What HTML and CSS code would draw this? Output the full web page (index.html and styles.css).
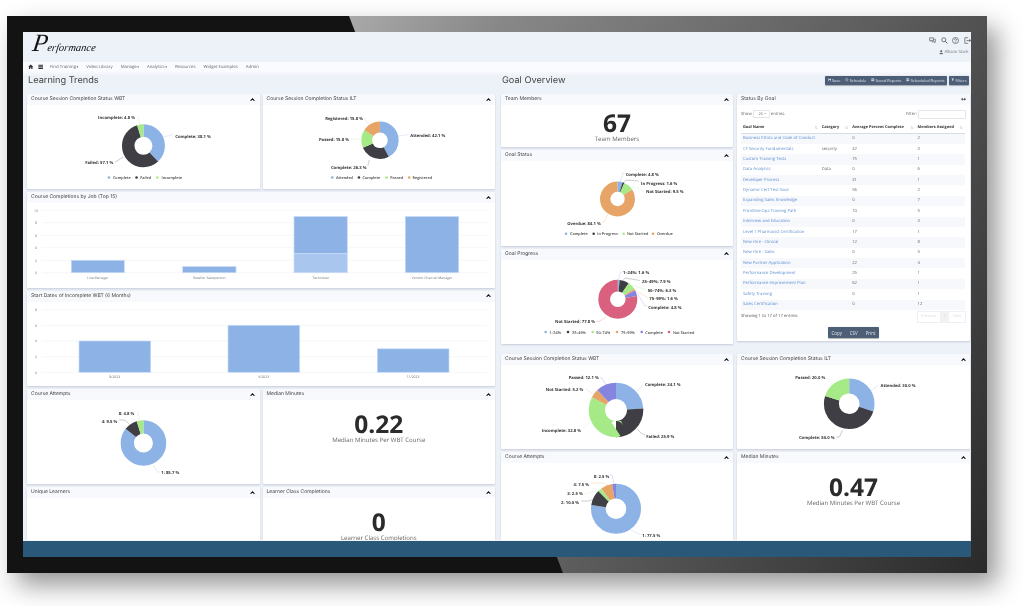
FILE: index.html
```html
<!DOCTYPE html>
<html lang="en">
<head>
<meta charset="UTF-8">
<title>Performance Dashboard</title>
<link rel="stylesheet" href="styles.css">
</head>
<body>

<!-- shared icons -->
<svg class="defs" width="0" height="0">
    <symbol id="chev" viewBox="0 0 6 4"><path d="M.7 3.3 3 1l2.3 2.3" fill="none" stroke="currentColor" stroke-width="1.3"/></symbol>
    <symbol id="home" viewBox="0 0 8 8"><path d="M4 .6.3 4h1.1v3.4h1.9V5.2h1.4v2.2h1.9V4h1.1z" fill="currentColor"/></symbol>
    <symbol id="grid" viewBox="0 0 8 8"><path d="M.5 1h7v1.5h-7zM.5 3.3h7v1.5h-7zM.5 5.6h7v1.5h-7z" fill="currentColor"/></symbol>
    <symbol id="chat" viewBox="0 0 10 10"><g fill="none" stroke="currentColor" stroke-width=".9"><path d="M1 1.2h5.5v3.7H3L1.6 6V4.9H1z"/><path d="M7.7 3.2H9v3.7h-.6V8L7 6.9H4.2V6"/></g></symbol>
    <symbol id="search" viewBox="0 0 10 10"><circle cx="4" cy="4" r="2.9" fill="none" stroke="currentColor" stroke-width="1"/><path d="m6.2 6.2 3 3" stroke="currentColor" stroke-width="1.2"/></symbol>
    <symbol id="help" viewBox="0 0 10 10"><circle cx="5" cy="5" r="4.3" fill="none" stroke="currentColor" stroke-width=".9"/><path d="M3.6 3.9C3.7 2 6.4 2.2 6.4 3.8 6.4 5 5 4.9 5 6.1" fill="none" stroke="currentColor" stroke-width=".9"/><path d="M4.6 6.9h.9v.9h-.9z" fill="currentColor"/></symbol>
    <symbol id="signout" viewBox="0 0 10 10"><path d="M6 1H1.2v8H6M3.6 5h6M7.4 2.9 9.5 5 7.4 7.1" fill="none" stroke="currentColor" stroke-width=".9"/></symbol>
    <symbol id="user" viewBox="0 0 8 8"><circle cx="4" cy="2.3" r="1.8" fill="currentColor"/><path d="M.6 7.6C.7 4.800 7.300 4.800 7.400 7.600z" fill="currentColor"/></symbol>
    <symbol id="disk" viewBox="0 0 8 8"><path d="M1 1h5l1 1v5H1zM2.200 1.300v1.700h3V1.300zM2.200 4.400v2.300h3.600V4.400z" fill="currentColor" fill-rule="evenodd"/></symbol>
    <symbol id="clock" viewBox="0 0 8 8"><circle cx="4" cy="4" r="3" fill="none" stroke="currentColor" stroke-width=".9"/><path d="M4 2.200V4l1.300.8" fill="none" stroke="currentColor" stroke-width=".7"/></symbol>
    <symbol id="funnel" viewBox="0 0 8 8"><path d="M.8 1h6.400L4.800 4v3.300l-1.600-1V4z" fill="currentColor"/></symbol>
</svg>

<div class="monitor">
<div class="screen">

    <div class="top-header">
        <div class="logo"><span class="logo-p">P</span>erformance</div>
        <div class="user-area">
            <div class="user-icons">
                <svg class="icon"><use href="#chat"/></svg>
                <svg class="icon"><use href="#search"/></svg>
                <svg class="icon"><use href="#help"/></svg>
                <svg class="icon"><use href="#signout"/></svg>
            </div>
            <div class="user-name"><svg class="icon-sm"><use href="#user"/></svg>Allison Stark</div>
        </div>
    </div>

    <div class="nav">
        <svg class="icon-nav"><use href="#home"/></svg>
        <svg class="icon-nav"><use href="#grid"/></svg>
        <a class="caret">Find Training</a>
        <a>Video Library</a>
        <a class="caret">Manage</a>
        <a class="caret">Analytics</a>
        <a>Resources</a>
        <a>Widget Examples</a>
        <a>Admin</a>
    </div>

    <div class="main">

        <!-- left: learning trends -->
        <div class="section">
            <div class="section-head"><h1>Learning Trends</h1></div>
            <div class="card-grid">

                <div class="card">
                    <div class="card-title">Course Session Completion Status WBT<svg class="chev"><use href="#chev"/></svg></div>
                    <svg class="chart" viewBox="0 0 232 84">
                        <g fill="none" stroke-width="12.5" transform="rotate(-90 116.2 40.8)">
                            <circle class="s-blue" cx="116.2" cy="40.8" r="15.25" pathLength="100" stroke-dasharray="38.1 100"/>
                            <circle class="s-dark" cx="116.2" cy="40.8" r="15.25" pathLength="100" stroke-dasharray="57.1 100" stroke-dashoffset="-38.1"/>
                            <circle class="s-green" cx="116.2" cy="40.8" r="15.25" pathLength="100" stroke-dasharray="4.8 100" stroke-dashoffset="-95.2"/>
                        </g>
                        <path class="lead s-blue" d="M136 32l10-2.500"/>
                        <path class="lead s-dark" d="M88 57l8-5"/>
                        <path class="lead s-green" d="M110.300 11.700 113 20"/>
                        <text class="lbl" x="148" y="32.500">Complete: 38.1 %</text>
                        <text class="lbl end" x="107.700" y="14.200">Incomplete: 4.8 %</text>
                        <text class="lbl end" x="86" y="58.500">Failed: 57.1 %</text>
                        <circle class="f-blue" cx="81.700" cy="72.500" r="1.300"/><text class="leg" x="85.700" y="74">Complete</text>
                        <circle class="f-dark" cx="109.300" cy="72.500" r="1.300"/><text class="leg" x="113" y="74">Failed</text>
                        <circle class="f-green" cx="130" cy="72.500" r="1.300"/><text class="leg" x="134.300" y="74">Incomplete</text>
                    </svg>
                </div>

                <div class="card">
                    <div class="card-title">Course Session Completion Status ILT<svg class="chev"><use href="#chev"/></svg></div>
                    <svg class="chart" viewBox="0 0 232 84">
                        <g fill="none" stroke-width="10.900" transform="rotate(-90 116.700 35.300)">
                            <circle class="s-blue" cx="116.700" cy="35.300" r="13.250" pathLength="100" stroke-dasharray="42.100 100"/>
                            <circle class="s-dark" cx="116.700" cy="35.300" r="13.250" pathLength="100" stroke-dasharray="26.300 100" stroke-dashoffset="-42.100"/>
                            <circle class="s-green" cx="116.700" cy="35.300" r="13.250" pathLength="100" stroke-dasharray="15.800 100" stroke-dashoffset="-68.400"/>
                            <circle class="s-orange" cx="116.700" cy="35.300" r="13.250" pathLength="100" stroke-dasharray="15.800 100" stroke-dashoffset="-84.200"/>
                        </g>
                        <path class="lead s-blue" d="M133.500 31.500 145 29.500"/>
                        <path class="lead s-dark" d="M106 55l-1.500 6"/>
                        <path class="lead s-green" d="M87 34h10"/>
                        <path class="lead s-orange" d="M101 13l6 9"/>
                        <text class="lbl" x="147" y="31.500">Attended: 42.1 %</text>
                        <text class="lbl end" x="99.700" y="14.500">Registered: 15.8 %</text>
                        <text class="lbl end" x="85.700" y="35.800">Passed: 15.8 %</text>
                        <text class="lbl end" x="103.300" y="63.500">Complete: 26.3 %</text>
                        <circle class="f-blue" cx="69" cy="72.500" r="1.300"/><text class="leg" x="72.700" y="74">Attended</text>
                        <circle class="f-dark" cx="95.700" cy="72.500" r="1.300"/><text class="leg" x="99.300" y="74">Complete</text>
                        <circle class="f-green" cx="123.300" cy="72.500" r="1.300"/><text class="leg" x="127" y="74">Passed</text>
                        <circle class="f-orange" cx="146" cy="72.500" r="1.300"/><text class="leg" x="149.300" y="74">Registered</text>
                    </svg>
                </div>

                <div class="card wide">
                    <div class="card-title">Course Completions by Job (Top 15)<svg class="chev"><use href="#chev"/></svg></div>
                    <svg class="chart" viewBox="0 0 468 84">
                        <path class="gridline" d="M14.700 7.300h446M14.700 19.700h446M14.700 32.300h446M14.700 44.700h446M14.700 57.300h446M14.700 69.700h446"/>
                        <text class="tick mid" x="9" y="8.700">10</text>
                        <text class="tick mid" x="9" y="21.100">8</text>
                        <text class="tick mid" x="9" y="33.700">6</text>
                        <text class="tick mid" x="9" y="46.100">4</text>
                        <text class="tick mid" x="9" y="58.700">2</text>
                        <text class="tick mid" x="9" y="71.100">0</text>
                        <rect class="bar" x="44.300" y="57.300" width="53" height="12.400"/>
                        <rect class="bar" x="155.700" y="63.500" width="53.300" height="6.200"/>
                        <rect class="bar" x="267" y="13.500" width="53.300" height="37.200"/>
                        <rect class="bar light" x="267" y="50.700" width="53.300" height="19"/>
                        <rect class="bar" x="378.300" y="13.500" width="53.400" height="56.200"/>
                        <text class="tick mid" x="70.800" y="75.500">Line Manager</text>
                        <text class="tick mid" x="182.300" y="75.500">Reseller Salesperson</text>
                        <text class="tick mid" x="293.700" y="75.500">Technician</text>
                        <text class="tick mid" x="405" y="75.500">Vendor Channel Manager</text>
                    </svg>
                </div>

                <div class="card wide">
                    <div class="card-title">Start Dates of Incomplete WBT (6 Months)<svg class="chev"><use href="#chev"/></svg></div>
                    <svg class="chart" viewBox="0 0 468 84">
                        <path class="gridline" d="M14.700 7.700h446M14.700 23.300h446M14.700 39h446M14.700 54.700h446M14.700 70.300h446"/>
                        <text class="tick mid" x="9" y="9.100">8</text>
                        <text class="tick mid" x="9" y="24.700">6</text>
                        <text class="tick mid" x="9" y="40.400">4</text>
                        <text class="tick mid" x="9" y="56.100">2</text>
                        <text class="tick mid" x="9" y="71.700">0</text>
                        <rect class="bar" x="52" y="39" width="71.700" height="31.300"/>
                        <rect class="bar" x="201" y="23.300" width="71.700" height="47"/>
                        <rect class="bar" x="350.300" y="46.800" width="71.700" height="23.500"/>
                        <text class="tick mid" x="87.700" y="75.800">8/2023</text>
                        <text class="tick mid" x="236.700" y="75.800">9/2023</text>
                        <text class="tick mid" x="386" y="75.800">11/2023</text>
                    </svg>
                </div>

                <div class="card">
                    <div class="card-title">Course Attempts<svg class="chev"><use href="#chev"/></svg></div>
                    <svg class="chart" viewBox="0 0 232 84">
                        <g fill="none" stroke-width="13.300" transform="rotate(-90 116.200 43)">
                            <circle class="s-blue" cx="116.200" cy="43" r="16.150" pathLength="100" stroke-dasharray="85.700 100"/>
                            <circle class="s-dark" cx="116.200" cy="43" r="16.150" pathLength="100" stroke-dasharray="9.500 100" stroke-dashoffset="-85.700"/>
                            <circle class="s-green" cx="116.200" cy="43" r="16.150" pathLength="100" stroke-dasharray="4.800 100" stroke-dashoffset="-95.200"/>
                        </g>
                        <path class="lead s-green" d="M110 11.500 112.500 20"/>
                        <path class="lead s-dark" d="M92 19.800l6 .5 4 4"/>
                        <path class="lead s-blue" d="M126 65l4 7h3"/>
                        <text class="lbl" x="134" y="73.800">1: 85.7 %</text>
                        <text class="lbl end" x="107" y="14.500">8: 4.8 %</text>
                        <text class="lbl end" x="90" y="22.800">4: 9.5 %</text>
                    </svg>
                </div>

                <div class="card">
                    <div class="card-title">Median Minutes<svg class="chev"><use href="#chev"/></svg></div>
                    <div class="stat">
                        <div class="stat-num">0.22</div>
                        <div class="stat-label">Median Minutes Per WBT Course</div>
                    </div>
                </div>

                <div class="card">
                    <div class="card-title">Unique Learners<svg class="chev"><use href="#chev"/></svg></div>
                </div>

                <div class="card">
                    <div class="card-title">Learner Class Completions<svg class="chev"><use href="#chev"/></svg></div>
                    <div class="stat">
                        <div class="stat-num">0</div>
                        <div class="stat-label">Learner Class Completions</div>
                    </div>
                </div>

            </div>
        </div>

        <!-- right: goal overview -->
        <div class="section">
            <div class="section-head">
                <h1>Goal Overview</h1>
                <div class="toolbar">
                    <div class="btn-group">
                        <button><svg class="icon-btn"><use href="#disk"/></svg>Save</button>
                        <button><svg class="icon-btn"><use href="#clock"/></svg>Schedule</button>
                        <button><svg class="icon-btn"><use href="#grid"/></svg>Saved Reports</button>
                        <button><svg class="icon-btn"><use href="#grid"/></svg>Scheduled Reports</button>
                    </div>
                    <div class="btn-group">
                        <button><svg class="icon-btn"><use href="#funnel"/></svg>Filters</button>
                    </div>
                </div>
            </div>

            <div class="goal-top">
                <div class="goal-stack">
                    <div class="card team-card">
                        <div class="card-title">Team Members<svg class="chev"><use href="#chev"/></svg></div>
                        <div class="stat stat-top">
                            <div class="stat-num">67</div>
                            <div class="stat-label">Team Members</div>
                        </div>
                    </div>

                    <div class="card">
                        <div class="card-title">Goal Status<svg class="chev"><use href="#chev"/></svg></div>
                        <svg class="chart" viewBox="0 0 232 84">
                            <g fill="none" stroke-width="10.300" transform="rotate(-90 116.500 38)">
                                <circle class="s-blue" cx="116.500" cy="38" r="12.350" pathLength="100" stroke-dasharray="4.800 100"/>
                                <circle class="s-dark" cx="116.500" cy="38" r="12.350" pathLength="100" stroke-dasharray="1.600 100" stroke-dashoffset="-4.800"/>
                                <circle class="s-green" cx="116.500" cy="38" r="12.350" pathLength="100" stroke-dasharray="9.500 100" stroke-dashoffset="-6.400"/>
                                <circle class="s-orange" cx="116.500" cy="38" r="12.350" pathLength="100" stroke-dasharray="84.100 100" stroke-dashoffset="-15.900"/>
                            </g>
                            <path class="lead s-blue" d="M119 21l3-9h2"/>
                            <path class="lead s-dark" d="M123 21.500l2-2.500 13 1"/>
                            <path class="lead s-green" d="M131 25l12 5"/>
                            <path class="lead s-orange" d="M107 53l-4 8h-2"/>
                            <text class="lbl" x="124.700" y="14.800">Complete: 4.8 %</text>
                            <text class="lbl" x="140" y="23.500">In Progress: 1.6 %</text>
                            <text class="lbl" x="145" y="32.200">Not Started: 9.5 %</text>
                            <text class="lbl end" x="99.700" y="63.800">Overdue: 84.1 %</text>
                            <circle class="f-blue" cx="65" cy="72.700" r="1.300"/><text class="leg" x="69" y="74.200">Complete</text>
                            <circle class="f-dark" cx="92.700" cy="72.700" r="1.300"/><text class="leg" x="96.300" y="74.200">In Progress</text>
                            <circle class="f-green" cx="122.700" cy="72.700" r="1.300"/><text class="leg" x="126" y="74.200">Not Started</text>
                            <circle class="f-orange" cx="152" cy="72.700" r="1.300"/><text class="leg" x="156" y="74.200">Overdue</text>
                        </svg>
                    </div>

                    <div class="card">
                        <div class="card-title">Goal Progress<svg class="chev"><use href="#chev"/></svg></div>
                        <svg class="chart" viewBox="0 0 232 84">
                            <g fill="none" stroke-width="11.700" transform="rotate(-90 116.800 39.300)">
                                <circle class="s-blue" cx="116.800" cy="39.300" r="13.650" pathLength="100" stroke-dasharray="1.600 100"/>
                                <circle class="s-dark" cx="116.800" cy="39.300" r="13.650" pathLength="100" stroke-dasharray="7.900 100" stroke-dashoffset="-1.600"/>
                                <circle class="s-green" cx="116.800" cy="39.300" r="13.650" pathLength="100" stroke-dasharray="6.300 100" stroke-dashoffset="-9.500"/>
                                <circle class="s-orange" cx="116.800" cy="39.300" r="13.650" pathLength="100" stroke-dasharray="1.600 100" stroke-dashoffset="-15.800"/>
                                <circle class="s-purple" cx="116.800" cy="39.300" r="13.650" pathLength="100" stroke-dasharray="4.800 100" stroke-dashoffset="-17.400"/>
                                <circle class="s-pink" cx="116.800" cy="39.300" r="13.650" pathLength="100" stroke-dasharray="77.800 100" stroke-dashoffset="-22.200"/>
                            </g>
                            <path class="lead s-blue" d="M117.500 20l2-8h2"/>
                            <path class="lead s-dark" d="M122 20.500l2-2.500 15 2.500"/>
                            <path class="lead s-green" d="M130 25l15 4.500"/>
                            <path class="lead s-orange" d="M134 30l13 8"/>
                            <path class="lead s-purple" d="M136 33l8 13h2"/>
                            <path class="lead s-pink" d="M105 57l-7 4.500h-3"/>
                            <text class="lbl" x="122" y="13.800">1–24%: 1.6 %</text>
                            <text class="lbl" x="141" y="22.500">25–49%: 7.9 %</text>
                            <text class="lbl" x="146.700" y="31.500">50–74%: 6.3 %</text>
                            <text class="lbl" x="148.300" y="40.200">75–99%: 1.6 %</text>
                            <text class="lbl" x="147.300" y="48.800">Complete: 4.8 %</text>
                            <text class="lbl end" x="94" y="63.200">Not Started: 77.8 %</text>
                            <circle class="f-blue" cx="44.700" cy="72" r="1.300"/><text class="leg" x="48.300" y="73.500">1–24%</text>
                            <circle class="f-dark" cx="67" cy="72" r="1.300"/><text class="leg" x="71" y="73.500">25–49%</text>
                            <circle class="f-green" cx="91.700" cy="72" r="1.300"/><text class="leg" x="95.300" y="73.500">50–74%</text>
                            <circle class="f-orange" cx="116" cy="72" r="1.300"/><text class="leg" x="120" y="73.500">75–99%</text>
                            <circle class="f-purple" cx="140.700" cy="72" r="1.300"/><text class="leg" x="144.300" y="73.500">Complete</text>
                            <circle class="f-pink" cx="168" cy="72" r="1.300"/><text class="leg" x="172" y="73.500">Not Started</text>
                        </svg>
                    </div>
                </div>

                <div class="card status-card">
                    <div class="card-title">Status By Goal<span class="resize">↔</span></div>
                    <div class="table-tools">
                        <div>Show <span class="fake-select">25<i>⌄</i></span> entries.</div>
                        <div class="filter">Filter: <span class="fake-input"></span></div>
                    </div>
                    <table class="goals">
                        <colgroup><col class="c1"><col class="c2"><col class="c3"><col class="c4"></colgroup>
                        <thead>
                            <tr><th>Goal Name</th><th>Category</th><th>Average Percent Complete</th><th>Members Assigned</th></tr>
                        </thead>
                        <tbody>
                            <tr><td><a>Business Ethics and Code of Conduct</a></td><td></td><td>0</td><td>2</td></tr>
                            <tr><td><a>CF Security Fundamentals</a></td><td>security</td><td>42</td><td>3</td></tr>
                            <tr><td><a>Custom Training Tests</a></td><td></td><td>75</td><td>1</td></tr>
                            <tr><td><a>Data Analytics</a></td><td>Data</td><td>0</td><td>6</td></tr>
                            <tr><td><a>Developer Process</a></td><td></td><td>31</td><td>1</td></tr>
                            <tr><td><a>Dynamic Cert Test Goal</a></td><td></td><td>56</td><td>2</td></tr>
                            <tr><td><a>Expanding Sales Knowledge</a></td><td></td><td>0</td><td>7</td></tr>
                            <tr><td><a>Frontline Ops Training Path</a></td><td></td><td>10</td><td>5</td></tr>
                            <tr><td><a>Interview and Education</a></td><td></td><td>0</td><td>3</td></tr>
                            <tr><td><a>Level 1 Pharmacist Certification</a></td><td></td><td>17</td><td>1</td></tr>
                            <tr><td><a>New Hire - Clinical</a></td><td></td><td>12</td><td>8</td></tr>
                            <tr><td><a>New Hire - Sales</a></td><td></td><td>0</td><td>5</td></tr>
                            <tr><td><a>New Partner Application</a></td><td></td><td>22</td><td>4</td></tr>
                            <tr><td><a>Performance Development</a></td><td></td><td>25</td><td>1</td></tr>
                            <tr><td><a>Performance Improvement Plan</a></td><td></td><td>62</td><td>1</td></tr>
                            <tr><td><a>Safety Training</a></td><td></td><td>0</td><td>1</td></tr>
                            <tr><td><a>Sales Certification</a></td><td></td><td>0</td><td>12</td></tr>
                        </tbody>
                    </table>
                    <div class="table-foot">
                        <div>Showing 1 to 17 of 17 entries</div>
                        <div class="pager"><span>Previous</span><span class="on">1</span><span>Next</span></div>
                    </div>
                    <div class="export"><div class="btn-group big"><button>Copy</button><button>CSV</button><button>Print</button></div></div>
                </div>
            </div>

            <div class="card-grid lower">
                <div class="card">
                    <div class="card-title">Course Session Completion Status WBT<svg class="chev"><use href="#chev"/></svg></div>
                    <svg class="chart" viewBox="0 0 232 84">
                        <g fill="none" stroke-width="16.300" transform="rotate(-90 115 45)">
                            <circle class="s-blue" cx="115" cy="45" r="19.150" pathLength="100" stroke-dasharray="24.100 100"/>
                            <circle class="s-dark" cx="115" cy="45" r="19.150" pathLength="100" stroke-dasharray="25.900 100" stroke-dashoffset="-24.100"/>
                            <circle class="s-green" cx="115" cy="45" r="19.150" pathLength="100" stroke-dasharray="32.800 100" stroke-dashoffset="-50"/>
                            <circle class="s-orange" cx="115" cy="45" r="19.150" pathLength="100" stroke-dasharray="5.200 100" stroke-dashoffset="-82.800"/>
                            <circle class="s-purple" cx="115" cy="45" r="19.150" pathLength="100" stroke-dasharray="12.100 100" stroke-dashoffset="-88"/>
                        </g>
                        <path class="lead s-blue" d="M136 26l6-6"/>
                        <path class="lead s-dark" d="M136 64l4 4 4 2"/>
                        <path class="lead s-green" d="M88 58l-6 5"/>
                        <path class="lead s-orange" d="M92 29l-7-5"/>
                        <path class="lead s-purple" d="M105 20l-4-7h-2"/>
                        <text class="lbl" x="144" y="21.200">Complete: 24.1 %</text>
                        <text class="lbl" x="145.300" y="72.500">Failed: 25.9 %</text>
                        <text class="lbl end" x="80" y="66.500">Incomplete: 32.8 %</text>
                        <text class="lbl end" x="82.300" y="25.500">Not Started: 5.2 %</text>
                        <text class="lbl end" x="97.700" y="13.800">Passed: 12.1 %</text>
                    </svg>
                </div>

                <div class="card">
                    <div class="card-title">Course Session Completion Status ILT<svg class="chev"><use href="#chev"/></svg></div>
                    <svg class="chart" viewBox="0 0 232 84">
                        <g fill="none" stroke-width="15" transform="rotate(-90 111.700 38.700)">
                            <circle class="s-blue" cx="111.700" cy="38.700" r="17.800" pathLength="100" stroke-dasharray="30 100"/>
                            <circle class="s-dark" cx="111.700" cy="38.700" r="17.800" pathLength="100" stroke-dasharray="50 100" stroke-dashoffset="-30"/>
                            <circle class="s-green" cx="111.700" cy="38.700" r="17.800" pathLength="100" stroke-dasharray="20 100" stroke-dashoffset="-80"/>
                        </g>
                        <path class="lead s-blue" d="M133 26l8-6"/>
                        <path class="lead s-dark" d="M105 65l-3 7h-3"/>
                        <path class="lead s-green" d="M95 20l-6-7"/>
                        <text class="lbl" x="143" y="21.500">Attended: 30.0 %</text>
                        <text class="lbl end" x="97" y="73.800">Complete: 50.0 %</text>
                        <text class="lbl end" x="87.700" y="13.800">Passed: 20.0 %</text>
                    </svg>
                </div>

                <div class="card">
                    <div class="card-title">Course Attempts<svg class="chev"><use href="#chev"/></svg></div>
                    <svg class="chart" viewBox="0 0 232 84">
                        <g fill="none" stroke-width="14.700" transform="rotate(-90 115 45.700)">
                            <circle class="s-blue" cx="115" cy="45.700" r="17.650" pathLength="100" stroke-dasharray="77.500 100"/>
                            <circle class="s-dark" cx="115" cy="45.700" r="17.650" pathLength="100" stroke-dasharray="10 100" stroke-dashoffset="-77.500"/>
                            <circle class="s-green" cx="115" cy="45.700" r="17.650" pathLength="100" stroke-dasharray="2.500 100" stroke-dashoffset="-87.500"/>
                            <circle class="s-orange" cx="115" cy="45.700" r="17.650" pathLength="100" stroke-dasharray="7.500 100" stroke-dashoffset="-90"/>
                            <circle class="s-purple" cx="115" cy="45.700" r="17.650" pathLength="100" stroke-dasharray="2.500 100" stroke-dashoffset="-97.500"/>
                        </g>
                        <path class="lead s-blue" d="M130 67l8 4h2"/>
                        <path class="lead s-dark" d="M95 35l-7 3h-8"/>
                        <path class="lead s-green" d="M100 27l-16 4"/>
                        <path class="lead s-orange" d="M107 22l-4-2H90"/>
                        <path class="lead s-purple" d="M113 20l-2-8h-2"/>
                        <text class="lbl" x="141.300" y="73.800">1: 77.5 %</text>
                        <text class="lbl end" x="108.300" y="14.500">8: 2.5 %</text>
                        <text class="lbl end" x="88" y="23.200">4: 7.5 %</text>
                        <text class="lbl end" x="81.700" y="32.200">3: 2.5 %</text>
                        <text class="lbl end" x="78" y="40.800">2: 10.0 %</text>
                    </svg>
                </div>

                <div class="card">
                    <div class="card-title">Median Minutes<svg class="chev"><use href="#chev"/></svg></div>
                    <div class="stat">
                        <div class="stat-num">0.47</div>
                        <div class="stat-label">Median Minutes Per WBT Course</div>
                    </div>
                </div>
            </div>
        </div>

    </div>

    <div class="footer-bar"></div>
</div>
</div>

</body>
</html>
```
FILE: styles.css
```css
* {
    box-sizing: border-box;
    margin: 0;
    padding: 0;
}
body {
    background-color: #ffffff;
    font-family: "Open Sans", sans-serif;
    font-size: 4.2px;
    color: #555555;
    padding: 16px 0 0 7px;
    overflow: hidden;
    height: 606px;
    text-rendering: geometricPrecision;
}
.defs {
    position: absolute;
}

/* monitor frame */
.monitor {
    position: relative;
    width: 980px;
    height: 557px;
    padding: 16px;
    background-color: #131313;
    box-shadow: 10px 12px 24px rgba(0,0,0,0.42);
    filter: blur(0.4px);
}
.monitor::before {
    content: "";
    position: absolute;
    inset: 0;
    background: linear-gradient(120deg, #aaaaaa 26%, #888888 38%, #5c5c5c 68%, #2a2a2a 100%);
    clip-path: polygon(342px 0, 100% 0, 100% 100%, 556px 100%);
}
.screen {
    position: relative;
    height: 100%;
    display: flex;
    flex-direction: column;
    background-color: #edf1f8;
    overflow: hidden;
}

/* header */
.top-header {
    flex: none;
    height: 30px;
    display: flex;
    justify-content: space-between;
    padding: 3px 0 0 9px;
}
.logo {
    font-family: "Liberation Serif", serif;
    font-style: italic;
    font-size: 10.5px;
    color: #111111;
    line-height: 27px;
    transform: skewX(-8deg);
}
.logo-p {
    font-size: 25px;
    line-height: 0;
}
.user-area {
    width: 42px;
    overflow: hidden;
    white-space: nowrap;
}
.user-icons {
    display: flex;
    gap: 4.7px;
    color: #444444;
    padding-top: 2px;
}
.icon {
    flex: none;
    width: 7px;
    height: 7px;
}
.user-name {
    display: flex;
    align-items: center;
    gap: 1px;
    margin: 6px 0 0 10px;
    color: #777777;
}
.icon-sm {
    width: 4.5px;
    height: 4.5px;
    color: #555555;
}

/* nav */
.nav {
    flex: none;
    height: 9px;
    display: flex;
    align-items: center;
    gap: 8px;
    padding-left: 5px;
    background-color: #fafbfe;
    font-size: 4.3px;
    color: #666666;
}
.nav a.caret::after {
    content: "▾";
    font-size: 3.5px;
    margin-left: 0.5px;
}
.icon-nav {
    width: 5.5px;
    height: 5.5px;
    margin-right: -4px;
    color: #333333;
}
.icon-nav + .icon-nav {
    margin-right: -1px;
}

/* main area */
.main {
    flex: 1;
    min-height: 0;
    overflow: hidden;
    display: grid;
    grid-template-columns: 468px 469px;
    gap: 6px;
    padding: 0 1px 0 4px;
    background: linear-gradient(#fafbfe, #edf1f8 5px);
}
.section-head {
    height: 23px;
    display: flex;
    justify-content: space-between;
    align-items: center;
    padding: 0 1px 5px 1px;
}
h1 {
    font-family: "Inter", sans-serif;
    font-weight: 400;
    font-size: 9.2px;
    color: #444444;
}
.toolbar {
    display: flex;
    gap: 1.5px;
}
.btn-group {
    display: flex;
    background-color: #4d5e77;
    border-radius: 1px;
    box-shadow: 0 0.5px 1px rgba(0,0,0,0.3);
}
button {
    display: flex;
    align-items: center;
    gap: 0.7px;
    height: 9px;
    padding: 0 2.5px;
    background: none;
    border: none;
    color: #dfe4ec;
    font-family: "Open Sans", sans-serif;
    font-size: 3.9px;
    white-space: nowrap;
}
.icon-btn {
    width: 3.6px;
    height: 3.6px;
    color: #e8ecf2;
}

/* cards */
.card-grid {
    display: grid;
    grid-template-columns: 232.5px 232.5px;
    grid-auto-rows: 95.25px;
    gap: 3px;
}
.card {
    background-color: #ffffff;
    box-shadow: 0 1px 2px rgba(90,100,130,0.25);
    border-radius: 1px;
}
.wide {
    grid-column: span 2;
}
.card-title {
    position: relative;
    height: 11px;
    line-height: 11px;
    padding-left: 4px;
    background-color: #f8f9fd;
    font-family: "Inter", sans-serif;
    font-size: 5px;
    color: #444444;
}
.chev {
    position: absolute;
    right: 4.5px;
    top: 3.8px;
    width: 5px;
    height: 3.4px;
    color: #111111;
}
.resize {
    position: absolute;
    right: 4px;
    top: 0;
    font-size: 6px;
    color: #111111;
    font-family: "DejaVu Sans", sans-serif;
}
.chart {
    display: block;
    width: 100%;
    height: 84px;
}

/* chart colours */
.s-blue { stroke: #8cb2e6; }
.s-dark { stroke: #3e3e44; }
.s-green { stroke: #a6ea87; }
.s-orange { stroke: #e6a566; }
.s-purple { stroke: #8585e0; }
.s-pink { stroke: #d9607f; }
.f-blue { fill: #8cb2e6; }
.f-dark { fill: #3e3e44; }
.f-green { fill: #a6ea87; }
.f-orange { fill: #e6a566; }
.f-purple { fill: #8585e0; }
.f-pink { fill: #d9607f; }
.lead {
    fill: none;
    stroke-width: 0.4;
    opacity: 0.65;
}
.lbl {
    font-size: 4.2px;
    font-weight: 700;
    fill: #333333;
}
.end {
    text-anchor: end;
}
.leg {
    font-size: 3.8px;
    font-weight: 600;
    fill: #444444;
}
.tick {
    font-size: 3.4px;
    fill: #777777;
}
.mid {
    text-anchor: middle;
}
.gridline {
    fill: none;
    stroke: #eef0f4;
    stroke-width: 0.6;
}
.bar {
    fill: #8cb2e6;
    stroke: #c8dcf7;
    stroke-width: 0.7;
}
.bar.light {
    fill: #a9c6ef;
}

/* big numbers */
.stat {
    display: flex;
    flex-direction: column;
    align-items: center;
    padding-top: 13px;
}
.stat-top {
    padding-top: 7px;
}
.stat-num {
    font-size: 24.5px;
    font-weight: 700;
    line-height: 23px;
    color: #2b2b2b;
}
.stat-label {
    font-size: 6.1px;
    line-height: 8px;
    color: #666666;
}

/* goal overview columns */
.goal-top {
    display: grid;
    grid-template-columns: 232px 233px;
    gap: 4px;
    align-items: start;
}
.goal-stack {
    display: flex;
    flex-direction: column;
    gap: 3px;
}
.goal-stack .card {
    height: 95.5px;
}
.goal-stack .team-card {
    height: 53px;
}
.lower {
    margin-top: 10px;
    grid-template-columns: 232px 233px;
    gap: 3px 4px;
}

/* status table */
.status-card {
    height: 247px;
    padding-bottom: 3px;
}
.status-card .card-title {
    margin-bottom: 4.5px;
}
.table-tools {
    display: flex;
    justify-content: space-between;
    align-items: center;
    height: 9px;
    padding: 0 4px;
    color: #666666;
}
.fake-select {
    display: inline-block;
    width: 17px;
    height: 8.5px;
    line-height: 8px;
    padding-left: 5px;
    border: 0.5px solid #e2e5ea;
    border-radius: 1px;
    font-size: 3.6px;
    position: relative;
}
.fake-select i {
    position: absolute;
    right: 2px;
    top: -0.5px;
    font-style: normal;
}
.filter {
    display: flex;
    align-items: center;
    gap: 1px;
}
.fake-input {
    display: block;
    width: 48px;
    height: 9px;
    border: 0.5px solid #e2e5ea;
    border-radius: 1px;
}
.goals {
    width: 224px;
    margin: 3px 4px 0;
    table-layout: fixed;
    border-collapse: collapse;
}
.c1 { width: 78.7px; }
.c2 { width: 30.5px; }
.c3 { width: 65.3px; }
.c4 { width: 49.5px; }
.goals th {
    height: 12px;
    padding-left: 2px;
    text-align: left;
    font-size: 3.9px;
    font-weight: 700;
    color: #333333;
    white-space: nowrap;
    border-bottom: 0.6px solid #d6dbe4;
    position: relative;
}
.goals th::after {
    content: "⇅";
    position: absolute;
    right: 2px;
    top: 3.5px;
    font-family: "DejaVu Sans", sans-serif;
    font-weight: 400;
    color: #c8c8c8;
}
.goals td {
    height: 10.375px;
    padding-left: 2px;
    white-space: nowrap;
    color: #666666;
}
.goals tbody tr:nth-child(odd) {
    background-color: #f6f8fc;
}
.goals a {
    color: #5f8fd0;
}
.table-foot {
    display: flex;
    justify-content: space-between;
    align-items: center;
    height: 11px;
    margin-top: 1.5px;
    padding: 0 4px;
}
.pager {
    display: flex;
    border: 0.5px solid #eef0f3;
    color: #dddddd;
    font-size: 3.9px;
    line-height: 10px;
}
.pager span {
    padding: 0 3.5px;
}
.pager .on {
    background-color: #f1f2f4;
    color: #cccccc;
}
.export {
    display: flex;
    justify-content: center;
    margin-top: 4.5px;
}
.btn-group.big button {
    height: 11.3px;
    padding: 0 4px;
    font-size: 4.4px;
}

.footer-bar {
    flex: none;
    height: 17px;
    background-color: #2a5878;
    border-top: 1px solid #f2f5fa;
}
```
